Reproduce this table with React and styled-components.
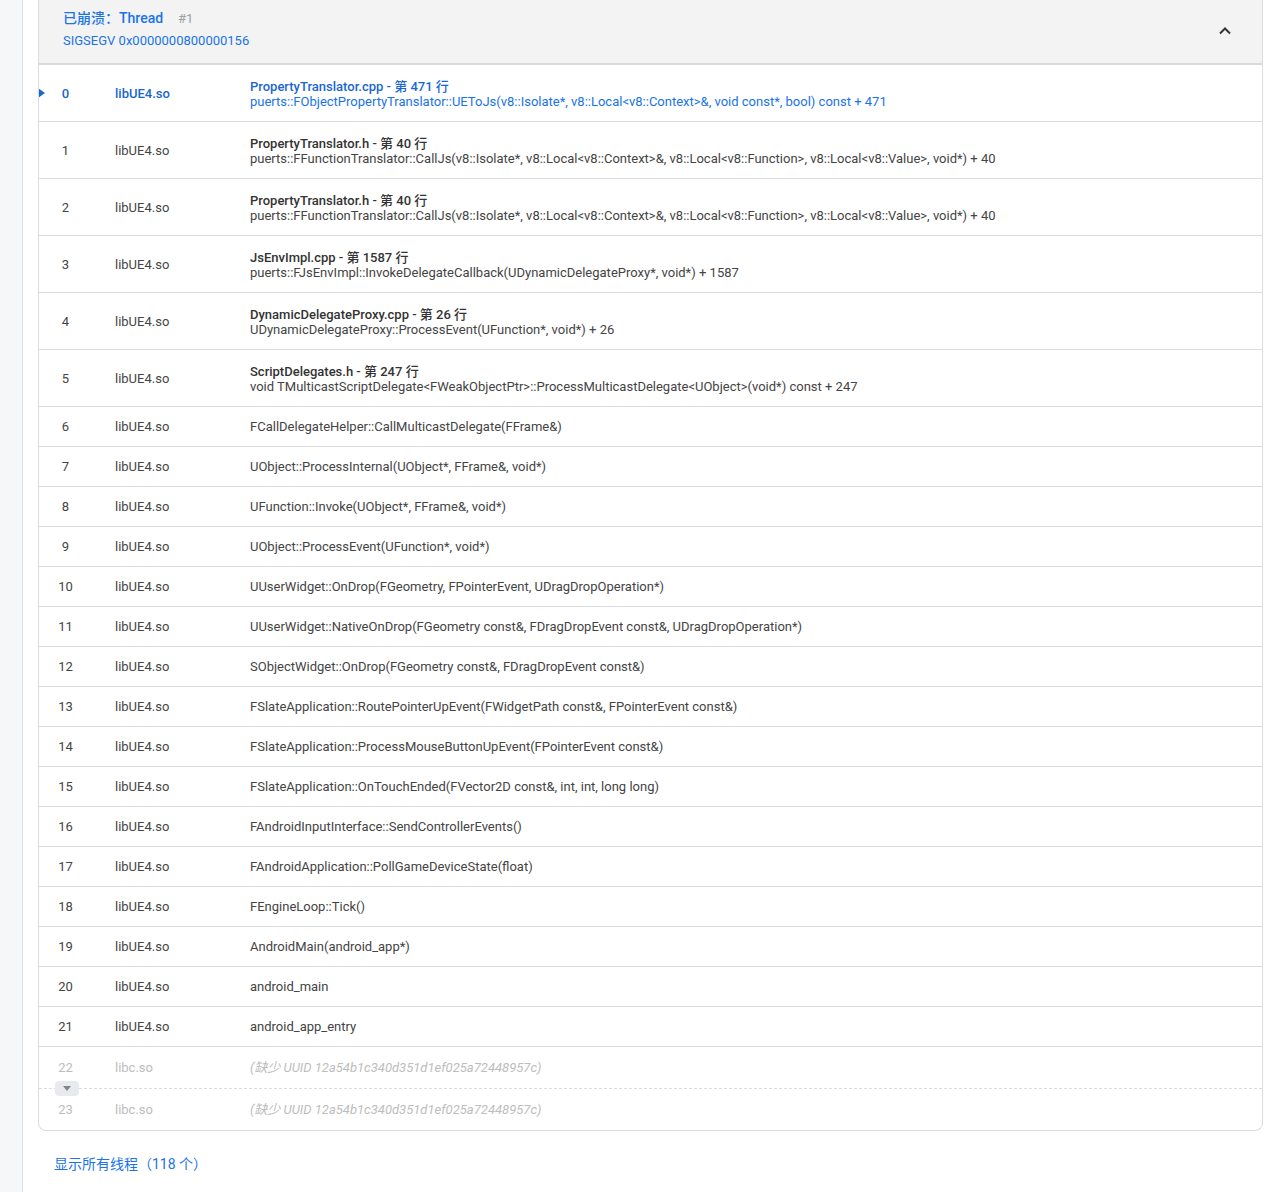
import React from 'react';
import styled, { createGlobalStyle } from 'styled-components';

const GlobalStyle = createGlobalStyle`
  html, body {
    margin: 0;
    padding: 0;
    background: #fff;
  }
  body {
    font-family: Roboto, 'Noto Sans CJK SC', sans-serif;
    font-size: 13px;
    color: #3c4043;
  }
`;

const Page = styled.div`
  display: flex;
  min-height: 1192px;
`;

const Sidebar = styled.div`
  width: 22px;
  flex-shrink: 0;
  background: #f6f7f9;
  border-right: 1px solid #e0e0e0;
`;

const Main = styled.div`
  flex: 1;
  padding: 0 16px 0 15px;
`;

const Card = styled.div`
  border: 1px solid #dadce0;
  border-top: none;
  border-radius: 0 0 8px 8px;
  overflow: hidden;
`;

const Header = styled.div`
  height: 65px;
  box-sizing: border-box;
  background: #f3f3f3;
  border-bottom: 2px solid #dadada;
  display: flex;
  align-items: flex-start;
  justify-content: space-between;
  padding: 0 29px 0 24px;
`;

const HeaderText = styled.div`
  padding-top: 8px;
`;

const Title = styled.div`
  font-size: 14px;
  color: #1a73e8;
  line-height: 20px;
  font-weight: 500;
`;

const Num = styled.span`
  color: #9aa0a6;
  font-weight: 400;
  font-size: 13px;
  margin-left: 15px;
`;

const Signal = styled.div`
  margin-top: 2px;
  font-size: 13px;
  color: #1a73e8;
  line-height: 20px;
`;

const Chevron = styled.button`
  border: none;
  background: none;
  padding: 0;
  margin-top: 22px;
  width: 16px;
  height: 16px;
  display: flex;
  align-items: center;
  justify-content: center;
  cursor: pointer;
`;

const Row = styled.div`
  position: relative;
  display: grid;
  grid-template-columns: 60px 135px 1fr;
  align-items: center;
  padding-left: 16px;
  height: ${p => (p.$tall ? 56 : p.$muted ? 41 : 39)}px;
  border-bottom: 1px ${p => (p.$dashed ? 'dashed' : 'solid')} #dadce0;
  color: ${p => (p.$active ? '#1967d2' : p.$muted ? '#bdbdbd' : '#444')};
  font-weight: ${p => (p.$active ? 500 : 400)};
  &:last-child {
    border-bottom: none;
  }
`;

const Marker = styled.div`
  position: absolute;
  left: -1px;
  top: 23px;
  width: 0;
  height: 0;
  border-top: 5px solid transparent;
  border-bottom: 5px solid transparent;
  border-left: 7px solid #1967d2;
`;

const Index = styled.div`
  width: 21px;
  text-align: center;
`;

const Lib = styled.div``;

const Frame = styled.div`
  line-height: 15px;
  white-space: nowrap;
  padding-top: ${p => (p.$tall ? 2 : 0)}px;
  font-style: ${p => (p.$muted ? 'italic' : 'normal')};
`;

const FileLine = styled.div`
  font-weight: 500;
  color: ${p => (p.$active ? '#1967d2' : '#333')};
`;

const Symbol = styled.div`
  font-weight: 400;
  color: ${p => (p.$active ? '#1a73e8' : p.$muted ? '#bdbdbd' : '#444')};
`;

const ExpandButton = styled.button`
  position: absolute;
  left: 16px;
  bottom: -8px;
  width: 24px;
  height: 15px;
  border: none;
  border-radius: 4px;
  background: #e8eaed;
  display: flex;
  align-items: center;
  justify-content: center;
  padding: 0;
  z-index: 1;
  &::after {
    content: '';
    border-left: 4px solid transparent;
    border-right: 4px solid transparent;
    border-top: 5px solid #80868b;
  }
`;

const ShowAll = styled.a`
  display: inline-block;
  margin: 22px 0 0 16px;
  font-size: 14px;
  color: #1a73e8;
  text-decoration: none;
  cursor: pointer;
`;

const frames = [
  { file: 'PropertyTranslator.cpp - 第 471 行', sym: 'puerts::FObjectPropertyTranslator::UEToJs(v8::Isolate*, v8::Local<v8::Context>&, void const*, bool) const + 471' },
  { file: 'PropertyTranslator.h - 第 40 行', sym: 'puerts::FFunctionTranslator::CallJs(v8::Isolate*, v8::Local<v8::Context>&, v8::Local<v8::Function>, v8::Local<v8::Value>, void*) + 40' },
  { file: 'PropertyTranslator.h - 第 40 行', sym: 'puerts::FFunctionTranslator::CallJs(v8::Isolate*, v8::Local<v8::Context>&, v8::Local<v8::Function>, v8::Local<v8::Value>, void*) + 40' },
  { file: 'JsEnvImpl.cpp - 第 1587 行', sym: 'puerts::FJsEnvImpl::InvokeDelegateCallback(UDynamicDelegateProxy*, void*) + 1587' },
  { file: 'DynamicDelegateProxy.cpp - 第 26 行', sym: 'UDynamicDelegateProxy::ProcessEvent(UFunction*, void*) + 26' },
  { file: 'ScriptDelegates.h - 第 247 行', sym: 'void TMulticastScriptDelegate<FWeakObjectPtr>::ProcessMulticastDelegate<UObject>(void*) const + 247' },
  { sym: 'FCallDelegateHelper::CallMulticastDelegate(FFrame&)' },
  { sym: 'UObject::ProcessInternal(UObject*, FFrame&, void*)' },
  { sym: 'UFunction::Invoke(UObject*, FFrame&, void*)' },
  { sym: 'UObject::ProcessEvent(UFunction*, void*)' },
  { sym: 'UUserWidget::OnDrop(FGeometry, FPointerEvent, UDragDropOperation*)' },
  { sym: 'UUserWidget::NativeOnDrop(FGeometry const&, FDragDropEvent const&, UDragDropOperation*)' },
  { sym: 'SObjectWidget::OnDrop(FGeometry const&, FDragDropEvent const&)' },
  { sym: 'FSlateApplication::RoutePointerUpEvent(FWidgetPath const&, FPointerEvent const&)' },
  { sym: 'FSlateApplication::ProcessMouseButtonUpEvent(FPointerEvent const&)' },
  { sym: 'FSlateApplication::OnTouchEnded(FVector2D const&, int, int, long long)' },
  { sym: 'FAndroidInputInterface::SendControllerEvents()' },
  { sym: 'FAndroidApplication::PollGameDeviceState(float)' },
  { sym: 'FEngineLoop::Tick()' },
  { sym: 'AndroidMain(android_app*)' },
  { sym: 'android_main' },
  { sym: 'android_app_entry' },
  { lib: 'libc.so', sym: '(缺少 UUID 12a54b1c340d351d1ef025a72448957c)', muted: true },
  { lib: 'libc.so', sym: '(缺少 UUID 12a54b1c340d351d1ef025a72448957c)', muted: true },
];

const App = () => {
  return (
    <Page>
      <GlobalStyle />
      <Sidebar />
      <Main>
        <Card>
          <Header>
            <HeaderText>
              <Title>
                已崩溃：Thread<Num>#1</Num>
              </Title>
              <Signal>SIGSEGV 0x0000000800000156</Signal>
            </HeaderText>
            <Chevron aria-label="收起">
              <svg width="14" height="9" viewBox="0 0 14 9">
                <polyline points="2,7.5 7,2.5 12,7.5" fill="none" stroke="#333" strokeWidth="2" />
              </svg>
            </Chevron>
          </Header>
          {frames.map((f, i) => {
            const active = i === 0;
            return (
              <Row
                key={i}
                $tall={!!f.file}
                $active={active}
                $muted={f.muted}
                $dashed={i === 22}
              >
                {active && <Marker />}
                <Index>{i}</Index>
                <Lib>{f.lib || 'libUE4.so'}</Lib>
                <Frame $muted={f.muted} $tall={!!f.file}>
                  {f.file && <FileLine $active={active}>{f.file}</FileLine>}
                  <Symbol $active={active} $muted={f.muted}>
                    {f.sym}
                  </Symbol>
                </Frame>
                {i === 22 && <ExpandButton aria-label="展开" />}
              </Row>
            );
          })}
        </Card>
        <ShowAll>显示所有线程（118 个）</ShowAll>
      </Main>
    </Page>
  );
};

export default App;
